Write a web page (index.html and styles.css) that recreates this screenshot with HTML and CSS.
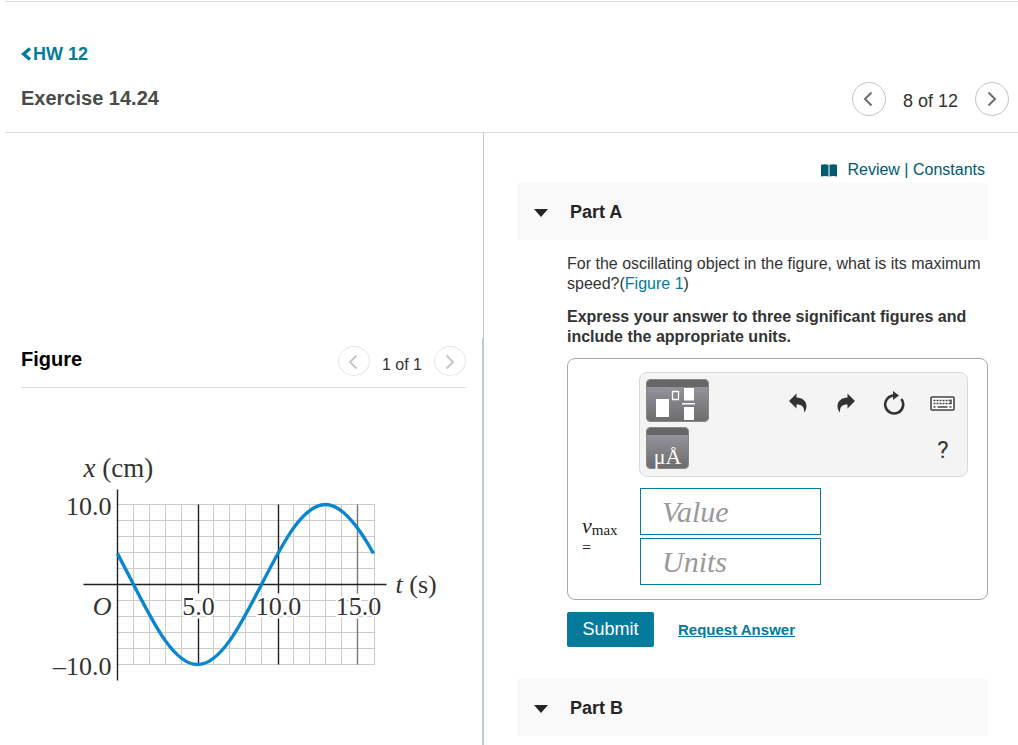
FILE: index.html
```html
<!DOCTYPE html>
<html lang="en">
<head>
    <meta charset="UTF-8">
    <meta name="viewport" content="width=device-width, initial-scale=1.0">
    <title>Exercise 14.24</title>
    <link rel="stylesheet" href="styles.css">
</head>
<body>
    <header class="page-header">
        <div class="titles">
            <a class="back-link" href="#">
                <svg width="11" height="14" viewBox="0 0 11 14"><path d="M9 1.500 2.500 7l6.500 5.500" fill="none" stroke="currentColor" stroke-width="3.400"/></svg>
                <span>HW 12</span>
            </a>
            <h1>Exercise 14.24</h1>
        </div>
        <nav class="pager">
            <button class="round" aria-label="Previous item">
                <svg width="12" height="16" viewBox="0 0 12 16"><path d="M8.500 1.500 2 8l6.500 6.500"/></svg>
            </button>
            <span>8 of 12</span>
            <button class="round" aria-label="Next item">
                <svg width="10" height="16" viewBox="0 0 10 16"><path d="M1.500 1.500 8 8l-6.500 6.500"/></svg>
            </button>
        </nav>
    </header>

    <main class="columns">
        <section class="left">
            <div class="intro"></div>
            <div class="figure-panel">
                <div class="figure-header">
                    <h2>Figure</h2>
                    <nav class="pager small">
                        <button class="round" aria-label="Previous figure" disabled>
                            <svg width="12" height="16" viewBox="0 0 12 16"><path d="M8.500 2.500 2 9l6.500 6.500"/></svg>
                        </button>
                        <span>1 of 1</span>
                        <button class="round" aria-label="Next figure" disabled>
                            <svg width="10" height="16" viewBox="0 0 10 16"><path d="M1.500 2.500 8 9l-6.500 6.500"/></svg>
                        </button>
                    </nav>
                </div>
                <svg class="graph" width="400" height="240" viewBox="0 0 400 240" role="img" aria-label="Position against time">
                    <g transform="translate(72.5 134.5)">
                        <!-- grid, one square is 1 s by 2 cm -->
                        <path class="grid" d="M0-80H257M0-64H257M0-48H257M0-32H257M0-16H257M0 16H257M0 32H257M0 48H257M0 64H257M0 80H257M16-80V80M32-80V80M48-80V80M64-80V80M96-80V80M112-80V80M128-80V80M144-80V80M176-80V80M192-80V80M208-80V80M224-80V80M257-80V80"/>
                        <path class="axis" d="M81-80V9M81 34V80M161-80V9M161 34V80"/>
                        <path class="axis light" d="M240-80V9M240 34V80"/>
                        <path class="axis" d="M-34 0H269M0-95V96"/>
                        <g class="labels">
                            <text class="wide" x="-34" y="-108"><tspan class="var">x</tspan> (cm)</text>
                            <text x="278" y="8"><tspan class="var">t</tspan> (s)</text>
                            <text class="end" x="-6" y="-70">10.0</text>
                            <text class="end" x="-6" y="90">–10.0</text>
                            <text class="end var" x="-6" y="30">O</text>
                            <text class="mid" x="81" y="30">5.0</text>
                            <text class="mid" x="161" y="30">10.0</text>
                            <text class="mid" x="241" y="30">15.0</text>
                        </g>
                        <path class="curve" d="M0-31C5-21 11-10 16 0 37 41 57 80 80 80 103 80 123 41 144 0 165-41 185-80 208-80 224-80 240-60 256-31"/>
                    </g>
                </svg>
            </div>
        </section>

        <section class="right">
            <div class="resources">
                <svg width="16" height="13" viewBox="0 0 16 13"><path d="M0 .8Q4-.5 7.500.8V12.500Q4 11.300 0 12.500ZM8.500.8Q12-.5 16 .8V12.500Q12 11.300 8.500 12.500Z" fill="currentColor"/></svg>
                <span><a href="#">Review</a> | <a href="#">Constants</a></span>
            </div>

            <h2 class="part-title">
                <button aria-expanded="true"><span class="caret"></span>Part A</button>
            </h2>
            <form class="part-body">
                <p>For the oscillating object in the figure, what is its maximum speed?(<a href="#">Figure 1</a>)</p>
                <p class="instructions">Express your answer to three significant figures and include the appropriate units.</p>

                <div class="answer">
                    <div class="toolbar">
                        <div class="tool-row">
                            <button type="button" class="palette templates" aria-label="Templates">
                                <svg width="63" height="43" viewBox="0 0 63 43">
                                    <path d="M10 20h13v18H10zM38 9h10v12.500H38zM38 28h10v13H38zM36 24h13v1.500H36z" fill="#fff"/>
                                    <path d="M26.500 12.500h6v8h-6z" fill="none" stroke="#fff" stroke-width="1.300"/>
                                </svg>
                            </button>
                            <div class="tools">
                                <button type="button" aria-label="Undo">
                                    <svg width="22" height="22" viewBox="0 0 22 22"><path d="M1 9 8.500 1.500V5.500C14 5.500 18.500 9 18.500 14c0 3-1 5-2.500 6.500C16.500 15 14 12.500 8.500 12.500V16.500Z" fill="#333"/></svg>
                                </button>
                                <button type="button" aria-label="Redo">
                                    <svg width="22" height="22" viewBox="0 0 22 22"><path d="M19 9 11.500 1.500V5.500C6 5.500 1.500 9 1.500 14c0 3 1 5 2.500 6.500C3.500 15 6 12.500 11.500 12.500V16.500Z" fill="#333"/></svg>
                                </button>
                                <button type="button" aria-label="Reset">
                                    <svg width="24" height="24" viewBox="0 0 24 24"><path d="M11 4.500A9 9 0 1 0 18.300 8" fill="none" stroke="#333" stroke-width="2.600"/><path d="M10 0v9l6-4.500Z" fill="#333"/></svg>
                                </button>
                                <button type="button" aria-label="Keyboard shortcuts">
                                    <svg width="26" height="18" viewBox="0 0 26 18">
                                        <rect x="1" y="3" width="23" height="13" rx="1" fill="#fff" stroke="#444" stroke-width="1.600"/>
                                        <path d="M3.500 6.500h17M3.500 9.500h14M3.500 13h2M19.500 13h2" fill="none" stroke="#444" stroke-width="1.500" stroke-dasharray="2 1"/>
                                        <path d="M7.500 13h10M18.500 9.500h2.500V5.500" fill="none" stroke="#444" stroke-width="1.500"/>
                                    </svg>
                                </button>
                            </div>
                        </div>
                        <div class="tool-row">
                            <button type="button" class="palette units">μÅ</button>
                            <div class="tools">
                                <button type="button" class="help">?</button>
                            </div>
                        </div>
                    </div>
                    <div class="variable"><i>v</i><sub>max</sub><br>=</div>
                    <div class="fields">
                        <input type="text" placeholder="Value" aria-label="Value">
                        <input type="text" placeholder="Units" aria-label="Units">
                    </div>
                </div>

                <div class="actions">
                    <button type="submit" class="submit">Submit</button>
                    <a class="request" href="#">Request Answer</a>
                </div>
            </form>

            <h2 class="part-title">
                <button aria-expanded="true"><span class="caret"></span>Part B</button>
            </h2>
        </section>
    </main>
</body>
</html>
```
FILE: styles.css
```css
* {
    box-sizing: border-box;
}

body {
    margin: 0;
    padding: 1px 0 0 5px;
    min-height: 100vh;
    display: flex;
    flex-direction: column;
    font-family: "Liberation Sans", Arial, sans-serif;
    font-size: 16px;
    line-height: 20px;
    color: #333;
    background-color: #fff;
}

h1, h2, p {
    margin: 0;
}

a {
    color: #047a9c;
    text-decoration: none;
}

button {
    font-family: inherit;
    color: inherit;
    border: none;
    background: none;
    padding: 0;
    cursor: pointer;
}

svg {
    display: block;
}

/* header */
.page-header {
    display: flex;
    justify-content: space-between;
    align-items: flex-end;
    padding: 42px 9px 16px 16px;
    border-top: 1px solid #ddd;
    border-bottom: 1px solid #ddd;
}

.titles {
    display: flex;
    flex-direction: column;
    gap: 20px;
    padding-bottom: 4px;
}

.back-link {
    display: flex;
    align-items: center;
    gap: 1px;
    font-size: 18px;
    font-weight: bold;
}

h1 {
    font-size: 20px;
    line-height: 28px;
    color: #4a4a4a;
}

.pager {
    display: flex;
    align-items: center;
    gap: 17px;
    font-size: 18px;
}

.pager span {
    padding-top: 4px;
}

.round {
    display: flex;
    align-items: center;
    justify-content: center;
    width: 34px;
    height: 34px;
    border: 1px solid #c4c4c4;
    border-radius: 50%;
}

.round path {
    fill: none;
    stroke: #6a7070;
    stroke-width: 2;
}

.pager.small {
    gap: 12px;
    font-size: 16px;
}

.small span {
    padding-top: 8px;
}

.small .round {
    width: 32px;
    height: 30px;
    border-color: #e6e6e6;
}

.small .round path {
    stroke: #c7c7c7;
}

/* columns */
.columns {
    flex: 1;
    display: grid;
    grid-template-columns: 479fr 534fr;
}

.left {
    display: flex;
    flex-direction: column;
}

.intro {
    height: 205px;
    border-right: 1px solid #c3c9d0;
}

.figure-panel {
    flex: 1;
    padding: 8px 16px 0 16px;
    border-right: 2px solid #b8cbdf;
}

.figure-header {
    display: flex;
    justify-content: space-between;
    align-items: center;
    padding-bottom: 11px;
    border-bottom: 1px solid #ddd;
}

.figure-header h2 {
    font-size: 20px;
    line-height: 26px;
    color: #000;
    padding-bottom: 4px;
}

.graph {
    margin: 62px 0 0 24px;
    max-width: 100%;
}

.grid {
    fill: none;
    stroke: #ccc;
}

.axis {
    fill: none;
    stroke: #231f20;
    stroke-width: 1.4;
}

.axis.light {
    stroke: #777;
}

.curve {
    fill: none;
    stroke: #0a86d0;
    stroke-width: 3.4;
}

.labels {
    font-family: "Liberation Serif", "Times New Roman", serif;
    font-size: 26px;
    fill: #333;
}

.wide {
    font-size: 27px;
}

.var {
    font-style: italic;
}

.end {
    text-anchor: end;
}

.mid {
    text-anchor: middle;
    stroke: #fff;
    stroke-width: 4;
    paint-order: stroke;
}

/* parts */
.right {
    padding: 27px 30px 8px 33px;
}

.resources {
    display: flex;
    justify-content: flex-end;
    align-items: center;
    gap: 10px;
    padding-right: 3px;
    margin-bottom: 3px;
    color: #005a70;
}

.resources a {
    color: #005a70;
}

.part-title {
    background-color: #f9f9f9;
    line-height: 20px;
}

.part-title button {
    display: flex;
    align-items: center;
    gap: 22px;
    width: 100%;
    height: 57px;
    padding: 2px 0 0 17px;
    font-size: 18px;
    font-weight: bold;
    color: #252525;
}

.caret {
    border: 7px solid transparent;
    border-top: 8px solid #252525;
    border-bottom: none;
}

.part-body {
    padding: 14px 0 32px 50px;
}

.instructions {
    margin-top: 13px;
    font-weight: bold;
}

.answer {
    display: grid;
    grid-template-columns: 57px 1fr;
    row-gap: 11px;
    margin-top: 11px;
    padding: 13px 19px 14px 14px;
    border: 1px solid #a9a9a9;
    border-radius: 8px;
}

.toolbar {
    grid-column: 2;
    display: flex;
    flex-direction: column;
    gap: 5px;
    padding: 6px 0 7px 6px;
    border: 1px solid #d9d9d9;
    border-radius: 8px;
    background-color: #f4f4f4;
}

.tool-row {
    display: flex;
    justify-content: space-between;
    align-items: flex-end;
}

.palette {
    border-radius: 5px;
    background: linear-gradient(#666 0, #666 8px, #94929b 8px, #6c6c6c 100%);
    box-shadow: inset 0 0 0 1px #888;
    color: #fff;
}

.templates {
    width: 63px;
    height: 43px;
}

.units {
    width: 43px;
    height: 42px;
    padding-top: 18px;
    font-family: "Liberation Serif", "Times New Roman", serif;
    font-size: 22px;
    line-height: 24px;
}

.tools {
    display: flex;
}

.tools button {
    display: flex;
    align-items: center;
    justify-content: center;
    width: 48px;
    height: 38px;
}

.tools .help {
    font-family: Roboto, "Liberation Sans", sans-serif;
    font-size: 24px;
}

.variable {
    align-self: center;
    font-family: "Liberation Serif", "Times New Roman", serif;
    color: #222;
}

.variable i {
    font-size: 22px;
}

.variable sub {
    font-size: 15px;
    line-height: 0;
    vertical-align: -2px;
}

.fields {
    display: flex;
    flex-direction: column;
    align-items: flex-start;
    gap: 3px;
    padding-left: 1px;
}

.fields input {
    width: 181px;
    height: 47px;
    padding: 0 21px;
    border: 1px solid #047a9c;
    font-family: "Liberation Serif", "Times New Roman", serif;
    font-size: 30px;
}

.fields input::placeholder {
    font-style: italic;
    color: #999;
}

.actions {
    display: flex;
    align-items: center;
    gap: 24px;
    margin-top: 12px;
}

.submit {
    width: 87px;
    height: 35px;
    border-radius: 2px;
    font-size: 18px;
    color: #fff;
    background-color: #047a9c;
}

.request {
    font-size: 15px;
    font-weight: bold;
    text-decoration: underline;
}
```
